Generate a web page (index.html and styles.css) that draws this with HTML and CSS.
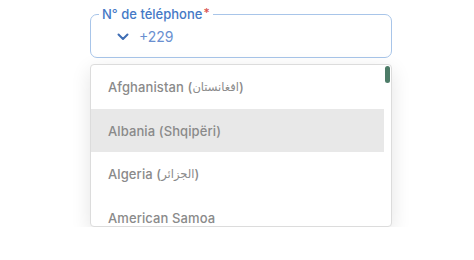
FILE: index.html
```html
<!DOCTYPE html>
<html lang="fr">
<head>
<meta charset="utf-8">
<link rel="stylesheet" href="styles.css">
</head>
<body>
<div class="wrap">
  <fieldset class="phone">
    <legend class="label">N° de téléphone<span class="req">*</span></legend>
    <div class="value">
      <svg class="chev" width="12" height="8" viewBox="0 0 12 8"><path d="M1.5 1.5 L6 6 L10.5 1.5" fill="none" stroke="currentColor" stroke-width="2" stroke-linecap="round" stroke-linejoin="round"/></svg>
      <span class="code">+229</span>
    </div>
  </fieldset>
  <div class="menu">
    <ul class="list">
      <li class="item">Afghanistan (<span class="ar" dir="rtl">افغانستان</span>)</li>
      <li class="item active">Albania (Shqipëri)</li>
      <li class="item">Algeria (<span class="ar" dir="rtl">الجزائر</span>)</li>
      <li class="item">American Samoa</li>
    </ul>
    <div class="thumb"></div>
  </div>
</div>
</body>
</html>
```
FILE: styles.css
```css
html, body { margin: 0; padding: 0; background: #fff; }
body { font-family: Inter, "Noto Sans", "DejaVu Sans", sans-serif; }
.wrap { margin-left: 90px; width: 302px; padding-top: 7px; }
.phone {
  margin: 0; padding: 0 0 0 8px;
  border: 1px solid #a8c5e9; border-radius: 7px;
  height: 51px; box-sizing: border-box;
}
.label {
  padding: 0 3px; font-size: 13px; line-height: 14px; font-weight: 500;
  color: #4579c6;
}
.req { color: #d9534f; margin-left: 1px; font-size: 12px; position: relative; top: -2px; }
.value { display: flex; align-items: center; gap: 10px; padding-left: 18px; height: 29px; }
.chev { color: #3f6db4; }
.code { font-size: 14px; color: #6a8fd0; }
.menu {
  position: relative; margin-top: 6px; height: 161px;
  border: 1px solid #dcdcdc; border-radius: 4px;
  box-shadow: 0 6px 20px rgba(0,0,0,0.11);
  overflow: hidden; padding-right: 7px; background: #fff;
}
.list { list-style: none; margin: 0; padding: 0; }
.item {
  height: 44px; display: flex; align-items: center; padding-left: 17px;
  font-size: 13px; font-weight: 500; color: #8a8a8a; letter-spacing: 0.1px;
}
.ar { font-size: 11.5px; }
.item.active { background: #e8e8e8; height: 43px; }
.thumb {
  position: absolute; right: 1px; top: 1px; width: 5px; height: 17px;
  border-radius: 3px; background: #4d7c68;
}
```
